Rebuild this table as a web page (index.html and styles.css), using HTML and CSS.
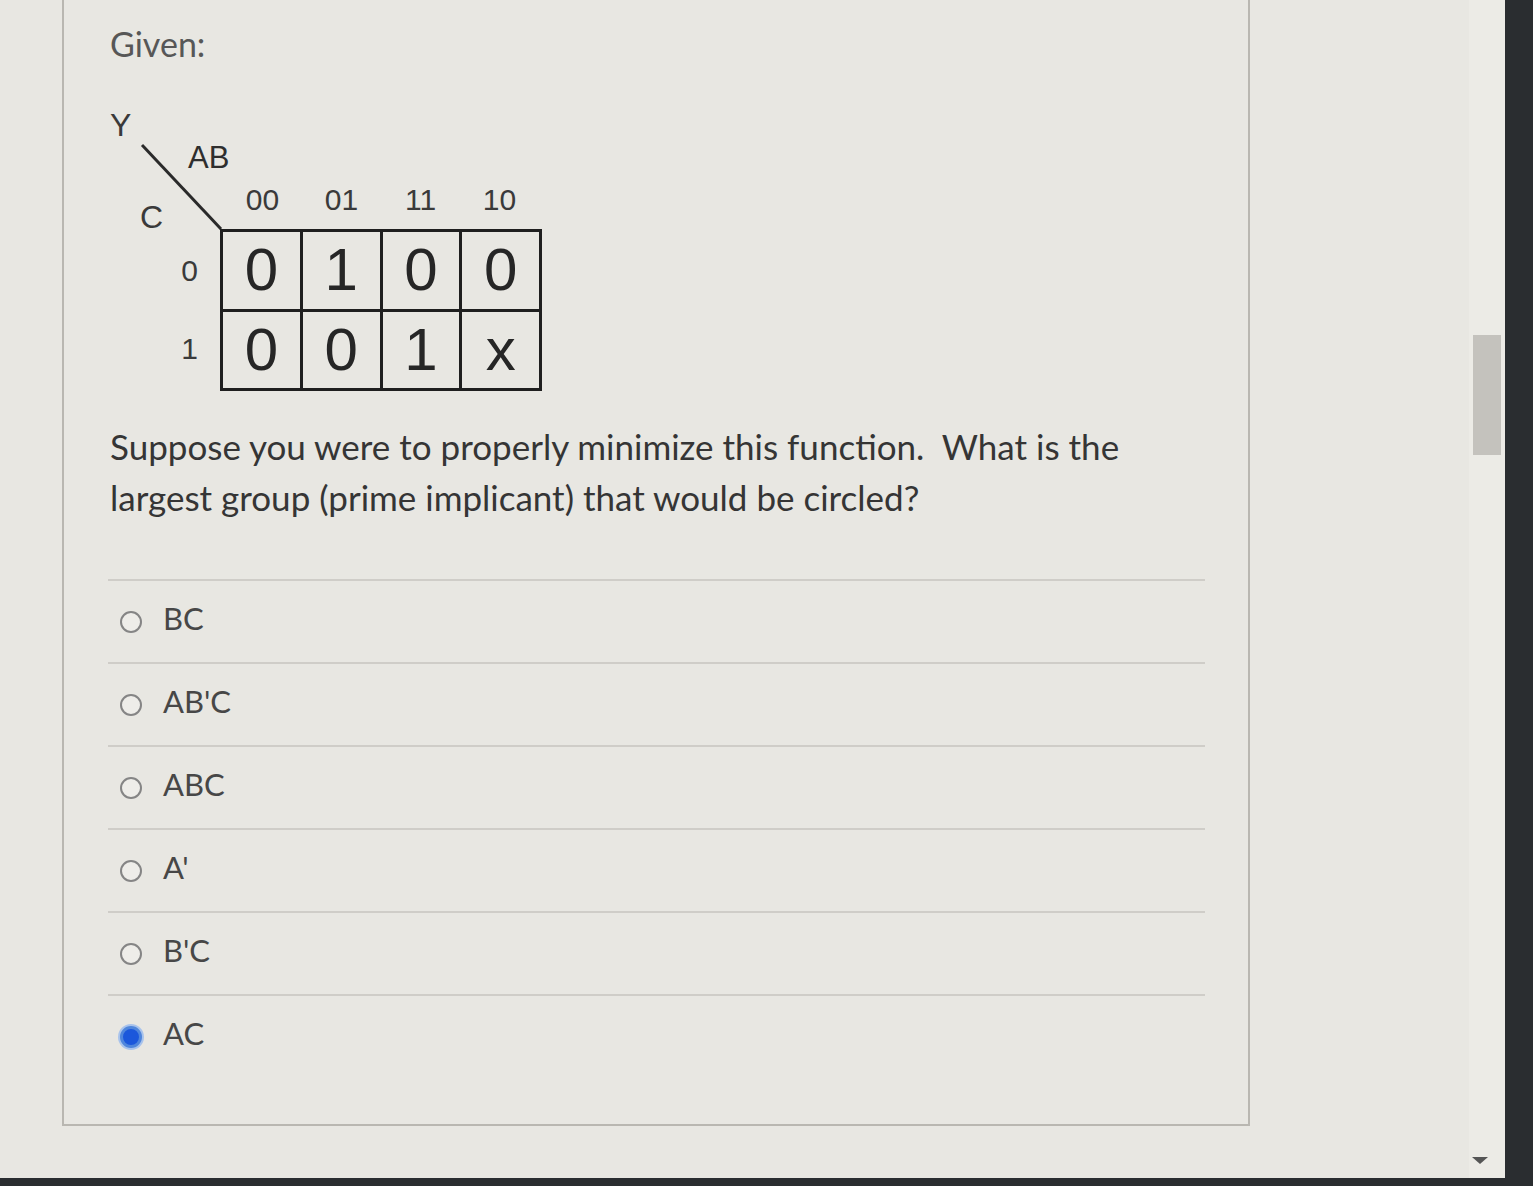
FILE: index.html
```html
<!DOCTYPE html>
<html lang="en">
<head>
<meta charset="utf-8">
<title>Quiz question</title>
<link rel="stylesheet" href="styles.css">
</head>
<body>
<div class="screen">
  <div class="page">
    <div class="card">
      <p class="given">Given:</p>
      <div class="kmap">
        <svg class="corner" width="110" height="125" viewBox="0 0 110 125">
          <text x="0" y="32" class="corner-text">Y</text>
          <line x1="32" y1="41" x2="111" y2="125" class="corner-line"/>
          <text x="78" y="64" class="corner-text ab">AB</text>
          <text x="30" y="124" class="corner-text">C</text>
        </svg>
        <div class="col-heads">
          <span>00</span><span>01</span><span>11</span><span>10</span>
        </div>
        <div class="row-heads">
          <span>0</span><span>1</span>
        </div>
        <div class="cells">
          <span>0</span><span>1</span><span>0</span><span>0</span>
          <span>0</span><span>0</span><span>1</span><span>x</span>
        </div>
      </div>
      <p class="question">Suppose you were to properly minimize this function.&nbsp; What is the largest group (prime implicant) that would be circled?</p>
      <ul class="answers">
        <li class="answer"><span class="radio"></span><span class="label">BC</span></li>
        <li class="answer"><span class="radio"></span><span class="label">AB'C</span></li>
        <li class="answer"><span class="radio"></span><span class="label">ABC</span></li>
        <li class="answer"><span class="radio"></span><span class="label">A'</span></li>
        <li class="answer"><span class="radio"></span><span class="label">B'C</span></li>
        <li class="answer"><span class="radio checked"></span><span class="label">AC</span></li>
      </ul>
    </div>
  </div>
  <div class="scrollbar">
    <div class="thumb"></div>
    <div class="arrow"></div>
  </div>
</div>
</body>
</html>
```

FILE: styles.css
```css
html, body {
  margin: 0;
  padding: 0;
}
body {
  background: #2a2d30;
  height: 1186px;
  overflow: hidden;
  font-family: Lato, "Open Sans", sans-serif;
}
.screen {
  display: flex;
  width: 1505px;
  height: 1178px;
  background: #e8e7e2;
}
.page {
  flex: 1;
  padding-left: 62px;
}
.card {
  box-sizing: border-box;
  width: 1188px;
  height: 1126px;
  border: 2px solid #b9b7b1;
  border-top: none;
  padding: 22px 0 0 46px;
}
.given {
  margin: 0;
  font-size: 34px;
  line-height: 44px;
  color: #575757;
}
.kmap {
  margin-top: 38px;
  display: grid;
  grid-template-columns: 110px 322px;
  grid-template-rows: 125px 162px;
  font-family: "Liberation Sans", Arial, sans-serif;
  color: #2a2a2a;
}
.corner {
  overflow: visible;
}
.corner-text {
  font-family: "Liberation Sans", Arial, sans-serif;
  font-size: 32px;
  fill: #3a3a3a;
}
.corner-text.ab {
  font-size: 31px;
  fill: #2e2e2e;
}
.corner-line {
  stroke: #2a2a2a;
  stroke-width: 3;
}
.col-heads {
  display: grid;
  grid-template-columns: repeat(4, 1fr);
  align-items: end;
  padding: 0 3px 14px;
  font-size: 30px;
  line-height: 30px;
  color: #3a3a3a;
  text-align: center;
}
.row-heads {
  display: grid;
  grid-template-rows: 1fr 1fr;
  align-items: center;
  justify-items: end;
  padding: 3px 22px 3px 0;
  font-size: 30px;
  color: #3a3a3a;
}
.cells {
  display: grid;
  grid-template-columns: repeat(4, 1fr);
  grid-template-rows: repeat(2, 1fr);
  gap: 3px;
  background: #1f1f1f;
  border: 3px solid #1f1f1f;
}
.cells span {
  background: #e8e7e2;
  display: flex;
  align-items: center;
  justify-content: center;
  font-size: 60px;
  line-height: 1;
  color: #262626;
}
.question {
  margin: 30px 0 0;
  width: 1080px;
  font-size: 35px;
  line-height: 51px;
  color: #353535;
}
.answers {
  list-style: none;
  margin: 56px 0 0 -2px;
  padding: 0;
  width: 1097px;
}
.answer {
  display: flex;
  align-items: center;
  gap: 21px;
  height: 81px;
  border-top: 2px solid #cfcdc8;
  padding-left: 12px;
  font-size: 31px;
  color: #474747;
}
.radio {
  box-sizing: border-box;
  width: 22px;
  height: 22px;
  border-radius: 50%;
  border: 2px solid #858585;
  background: #eeede9;
  flex: none;
}
.radio.checked {
  border: 3px solid #4f86dc;
  background: #1b57db;
  box-shadow: 0 0 0 2px #a8c3ec;
}
.label {
  line-height: 1;
  margin-top: -6px;
}
.scrollbar {
  width: 36px;
  display: flex;
  flex-direction: column;
  align-items: center;
  background: #ecebe6;
}
.thumb {
  margin-top: 335px;
  width: 28px;
  height: 120px;
  background: #c4c2bd;
}
.arrow {
  margin-top: auto;
  margin-bottom: 14px;
  margin-right: 14px;
  width: 0;
  height: 0;
  border-left: 8px solid transparent;
  border-right: 8px solid transparent;
  border-top: 7px solid #555;
}
```
